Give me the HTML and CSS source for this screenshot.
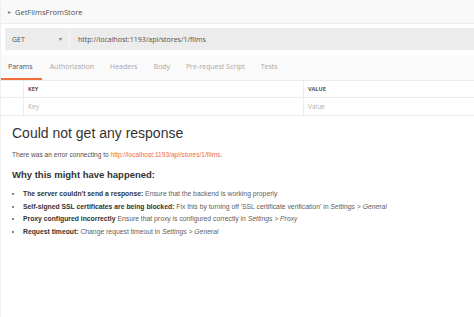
FILE: index.html
```
<!DOCTYPE html>
<html>
<head>
<title>GetFilmsFromStore</title>
<link rel="stylesheet" href="styles.css">
</head>
<body>
<div class="app">
	<div class="title_bar">
		<span class="caret">&#9656;</span>
		<span class="req_name">GetFilmsFromStore</span>
	</div>

	<div class="url_bar">
		<div class="method">
			<span>GET</span>
			<span class="arrow">&#9662;</span>
		</div>
		<div class="url">http://localhost:1193/api/stores/1/films</div>
	</div>

	<ul class="tabs">
		<li class="active">Params</li>
		<li>Authorization</li>
		<li>Headers</li>
		<li>Body</li>
		<li>Pre-request Script</li>
		<li>Tests</li>
	</ul>

	<div class="params">
		<div class="cell"></div>
		<div class="cell head">KEY</div>
		<div class="cell head">VALUE</div>
		<div class="cell"></div>
		<div class="cell hint">Key</div>
		<div class="cell hint">Value</div>
	</div>

	<div class="response">
		<h1>Could not get any response</h1>
		<p class="error">There was an error connecting to <a href="#">http://localhost:1193/api/stores/1/films</a>.</p>
		<h2>Why this might have happened:</h2>
		<ul class="reasons">
			<li><b>The server couldn't send a response:</b> Ensure that the backend is working properly</li>
			<li><b>Self-signed SSL certificates are being blocked:</b> Fix this by turning off 'SSL certificate verification' in <i>Settings &gt; General</i></li>
			<li><b>Proxy configured incorrectly</b> Ensure that proxy is configured correctly in <i>Settings &gt; Proxy</i></li>
			<li><b>Request timeout:</b> Change request timeout in <i>Settings &gt; General</i></li>
		</ul>
	</div>
</div>
</body>
</html>
```

FILE: styles.css
```
body {
	margin: 0;
	background-color: white;
	font-family: "Open Sans", sans-serif;
}

.app {
	width: 474px;
	height: 317px;
	border-left: 1px solid #f0f0f0;
	box-sizing: border-box;
}

.title_bar {
	height: 23px;
	background-color: #f9f9f9;
	border-bottom: 1px solid #ececec;
	display: flex;
	align-items: center;
	padding-left: 7px;
	font-size: 7.5px;
	color: #505050;
}

.caret {
	font-size: 6px;
	margin-right: 4px;
	color: #808080;
}

.url_bar {
	margin: 4px 0 0 4px;
	height: 22px;
	background-color: #ececec;
	display: flex;
	align-items: center;
	font-size: 7px;
	color: #505050;
}

.method {
	width: 65px;
	height: 100%;
	box-sizing: border-box;
	padding: 0 7px;
	display: flex;
	align-items: center;
	justify-content: space-between;
	border-right: 1px solid #f6f6f6;
}

.arrow {
	font-size: 6px;
	color: #808080;
}

.url {
	padding-left: 8px;
}

.tabs {
	list-style: none;
	margin: 5px 0 0 0;
	padding: 0;
	height: 25px;
	background-color: #fafafa;
	display: flex;
	font-size: 7px;
	color: #a8a8a8;
}

.tabs li {
	padding: 0 8px;
	display: flex;
	align-items: center;
	border-bottom: 2px solid transparent;
	box-sizing: border-box;
}

.tabs li.active {
	color: #505050;
	border-bottom-color: #f26b3a;
	padding: 0 9px 0 7px;
}

.params {
	display: grid;
	grid-template-columns: 23px 280px 1fr;
	grid-template-rows: 17px 18px;
	border-top: 1px solid #ececec;
	font-size: 6px;
}

.cell {
	border-bottom: 1px solid #ececec;
	border-right: 1px solid #ececec;
	display: flex;
	align-items: center;
	padding-left: 4px;
}

.cell:nth-child(3n) {
	border-right: none;
}

.head {
	font-weight: bold;
	color: #505050;
	font-size: 5.5px;
}

.hint {
	color: #b0b0b0;
	font-size: 6.5px;
}

.response {
	padding: 0 11px;
	font-family: "Liberation Sans", Arial, sans-serif;
	color: #333;
}

.response h1 {
	font-size: 14px;
	font-weight: normal;
	margin: 9px 0 0 0;
}

.error {
	font-size: 6.6px;
	margin: 10px 0 0 0;
	color: #505050;
}

.error a {
	color: #f26b3a;
	text-decoration: none;
}

.response h2 {
	font-size: 9.5px;
	margin: 11px 0 0 0;
}

.reasons {
	margin: 10px 0 0 0;
	padding-left: 11px;
	font-size: 6.8px;
	color: #606060;
}

.reasons li {
	margin-bottom: 5.7px;
}

.reasons b {
	color: #333;
}
```
